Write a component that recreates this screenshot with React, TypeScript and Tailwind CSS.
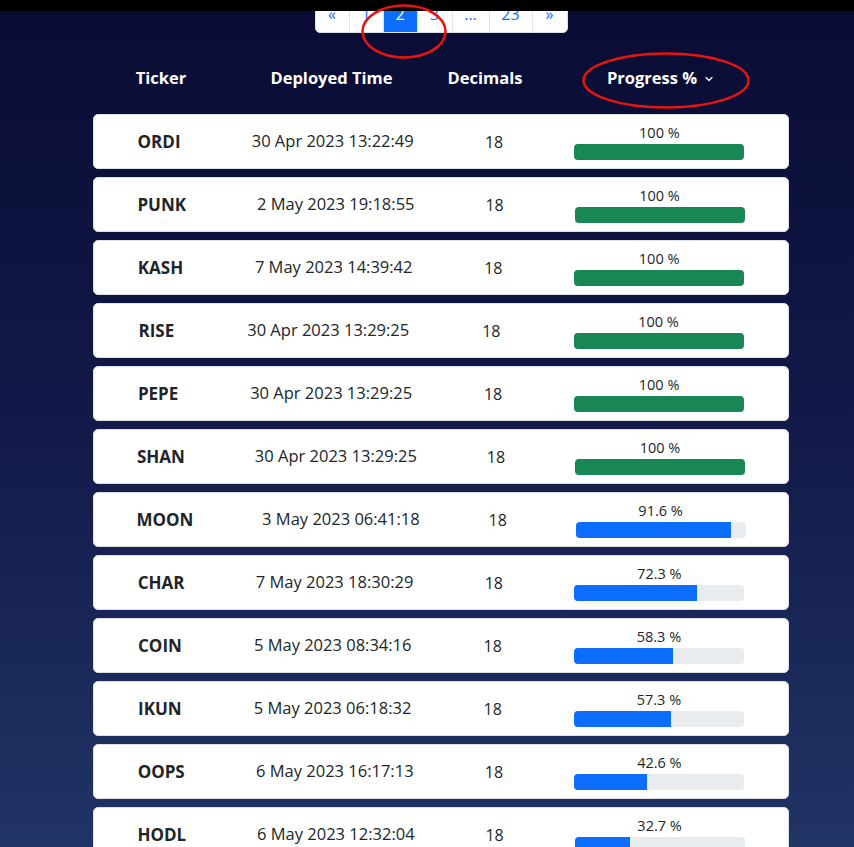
import { ChevronDown } from "lucide-react";

type Token = {
  ticker: string;
  deployed: string;
  decimals: number;
  progress: number;
};

const tokens: Token[] = [
  { ticker: "ORDI", deployed: "30 Apr 2023 13:22:49", decimals: 18, progress: 100 },
  { ticker: "PUNK", deployed: "2 May 2023 19:18:55", decimals: 18, progress: 100 },
  { ticker: "KASH", deployed: "7 May 2023 14:39:42", decimals: 18, progress: 100 },
  { ticker: "RISE", deployed: "30 Apr 2023 13:29:25", decimals: 18, progress: 100 },
  { ticker: "PEPE", deployed: "30 Apr 2023 13:29:25", decimals: 18, progress: 100 },
  { ticker: "SHAN", deployed: "30 Apr 2023 13:29:25", decimals: 18, progress: 100 },
  { ticker: "MOON", deployed: "3 May 2023 06:41:18", decimals: 18, progress: 91.6 },
  { ticker: "CHAR", deployed: "7 May 2023 18:30:29", decimals: 18, progress: 72.3 },
  { ticker: "COIN", deployed: "5 May 2023 08:34:16", decimals: 18, progress: 58.3 },
  { ticker: "IKUN", deployed: "5 May 2023 06:18:32", decimals: 18, progress: 57.3 },
  { ticker: "OOPS", deployed: "6 May 2023 16:17:13", decimals: 18, progress: 42.6 },
  { ticker: "HODL", deployed: "6 May 2023 12:32:04", decimals: 18, progress: 32.7 },
];

const pages = [
  { label: "«", w: "w-[35px]" },
  { label: "1", w: "w-[35px]" },
  { label: "2", w: "w-[35px]" },
  { label: "3", w: "w-[36px]" },
  { label: "...", w: "w-[38px]" },
  { label: "23", w: "w-[44px]" },
  { label: "»", w: "w-[36px]" },
];

function Pagination() {
  return (
    <ul className="flex self-center">
      {pages.map((p, i) => (
        <li
          key={i}
          className={
            p.w +
            " h-[38px] flex items-center justify-center text-[16px] border border-[#dee2e6] -ml-px first:ml-0 first:rounded-l-[5px] last:rounded-r-[5px] " +
            (p.label === "2" ? "bg-[#0d6efd] border-[#0d6efd] text-white" : "bg-white text-[#0d6efd]")
          }
        >
          {p.label}
        </li>
      ))}
    </ul>
  );
}

function Row({ t }: { t: Token }) {
  const done = t.progress >= 100;
  return (
    <div className="h-[55px] bg-white border border-[#dee2e6] rounded-[5px] flex items-center justify-around px-2 text-[#212529]">
      <span className="font-bold text-[17px]">{t.ticker}</span>
      <span className="text-[16.5px]">{t.deployed}</span>
      <span className="text-[16px]">{t.decimals}</span>
      <div className="flex flex-col items-center">
        <span className="text-[14.5px] leading-5">{t.progress} %</span>
        <div className="w-[170px] h-4 mt-px rounded-[4px] bg-[#e9ecef] overflow-hidden">
          <div
            className={done ? "h-full bg-[#198754]" : "h-full bg-[#0d6efd]"}
            style={{ width: `${t.progress}%` }}
          />
        </div>
      </div>
    </div>
  );
}

export default function App() {
  return (
    <main
      className="relative h-[847px] overflow-hidden bg-gradient-to-b from-[#090b33] via-[#121a49] to-[#213466]"
      style={{ fontFamily: '"Open Sans", "Noto Sans", sans-serif' }}
    >
      {/* top bar */}
      <div className="absolute inset-x-0 top-0 h-[11px] bg-black z-10" />

      <div className="ml-[93px] w-[696px] flex flex-col -mt-[5px]">
        <Pagination />

        {/* Header */}
        <div className="h-[81px] pt-[9px] grid grid-cols-[136px_205px_102px_250px] items-center text-white font-bold text-[16.5px]">
          <span className="text-center">Ticker</span>
          <span className="text-center">Deployed Time</span>
          <span className="text-center">Decimals</span>
          <span className="flex items-center justify-center gap-1.5">
            Progress %
            <ChevronDown size={12} strokeWidth={2.5} className="mt-0.5" />
          </span>
        </div>

        <div className="flex flex-col gap-2">
          {tokens.map((t) => (
            <Row key={t.ticker} t={t} />
          ))}
        </div>
      </div>

      {/* annotations */}
      <svg className="absolute inset-0 z-20 pointer-events-none" width="854" height="847">
        <ellipse cx="404" cy="31.5" rx="41.5" ry="26" fill="none" stroke="#e8140e" strokeWidth="2.5" />
        <ellipse cx="666" cy="80.5" rx="82.5" ry="27" fill="none" stroke="#e8140e" strokeWidth="2.5" />
      </svg>
    </main>
  );
}
